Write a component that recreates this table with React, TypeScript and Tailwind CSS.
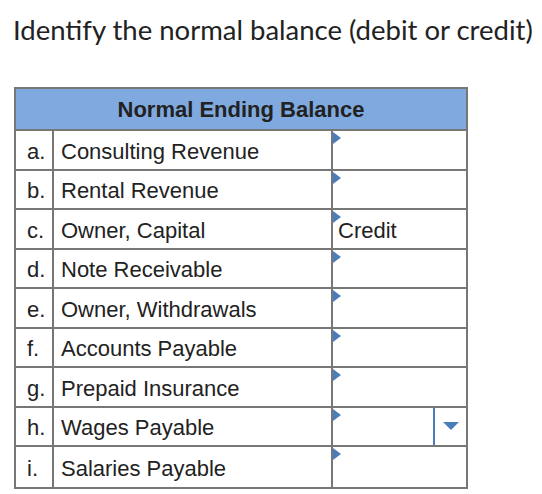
const rows = [
  { letter: "a.", name: "Consulting Revenue", value: "" },
  { letter: "b.", name: "Rental Revenue", value: "" },
  { letter: "c.", name: "Owner, Capital", value: "Credit" },
  { letter: "d.", name: "Note Receivable", value: "" },
  { letter: "e.", name: "Owner, Withdrawals", value: "" },
  { letter: "f.", name: "Accounts Payable", value: "" },
  { letter: "g.", name: "Prepaid Insurance", value: "" },
  { letter: "h.", name: "Wages Payable", value: "", open: true },
  { letter: "i.", name: "Salaries Payable", value: "" },
];

const Marker = () => (
  <svg width="8" height="12" viewBox="0 0 8 12" className="absolute left-0 top-[1px]">
    <polygon points="0,0 8,6 0,12" fill="#4a7ebb" />
  </svg>
);

const App = () => {
  return (
    <div className="min-h-screen bg-white text-[#222] pt-[13px]">
      <h1 className="ml-[13px] text-[27.5px] leading-[34px] font-normal whitespace-nowrap" style={{ fontFamily: "Lato, 'Open Sans', sans-serif" }}>
        Identify the normal balance (debit or credit)
      </h1>
      <div
        className="ml-[14px] mt-[40px] w-[454px] border-2 border-[#777]"
        style={{ fontFamily: "'Liberation Sans', Arial, sans-serif" }}
      >
        <div className="h-[42px] bg-[#80aadf] border-b-2 border-[#777] flex items-center justify-center text-[22px] font-bold">
          Normal Ending Balance
        </div>
        {rows.map((row, i) => (
          <div
            key={row.letter}
            className={`flex h-[39.5px] text-[22px] ${i < rows.length - 1 ? "border-b-2 border-[#777]" : ""}`}
          >
            <div className="w-[38px] pl-[11px] pt-[3px] flex items-center border-r-2 border-[#777]">{row.letter}</div>
            <div className="w-[279px] pl-[7px] pt-[3px] flex items-center border-r-2 border-[#777]">{row.name}</div>
            <div className="relative flex-1 flex items-center">
              <Marker />
              {row.value && <span className="pl-[5px] pt-[3px]">{row.value}</span>}
              {row.open && (
                <div className="ml-auto h-full w-[33px] border-l-2 border-[#4a7ebb] flex items-center justify-center">
                  <svg width="16" height="8" viewBox="0 0 16 8">
                    <polygon points="0,0 16,0 8,8" fill="#4a7ebb" />
                  </svg>
                </div>
              )}
            </div>
          </div>
        ))}
      </div>
    </div>
  );
};

export default App;
